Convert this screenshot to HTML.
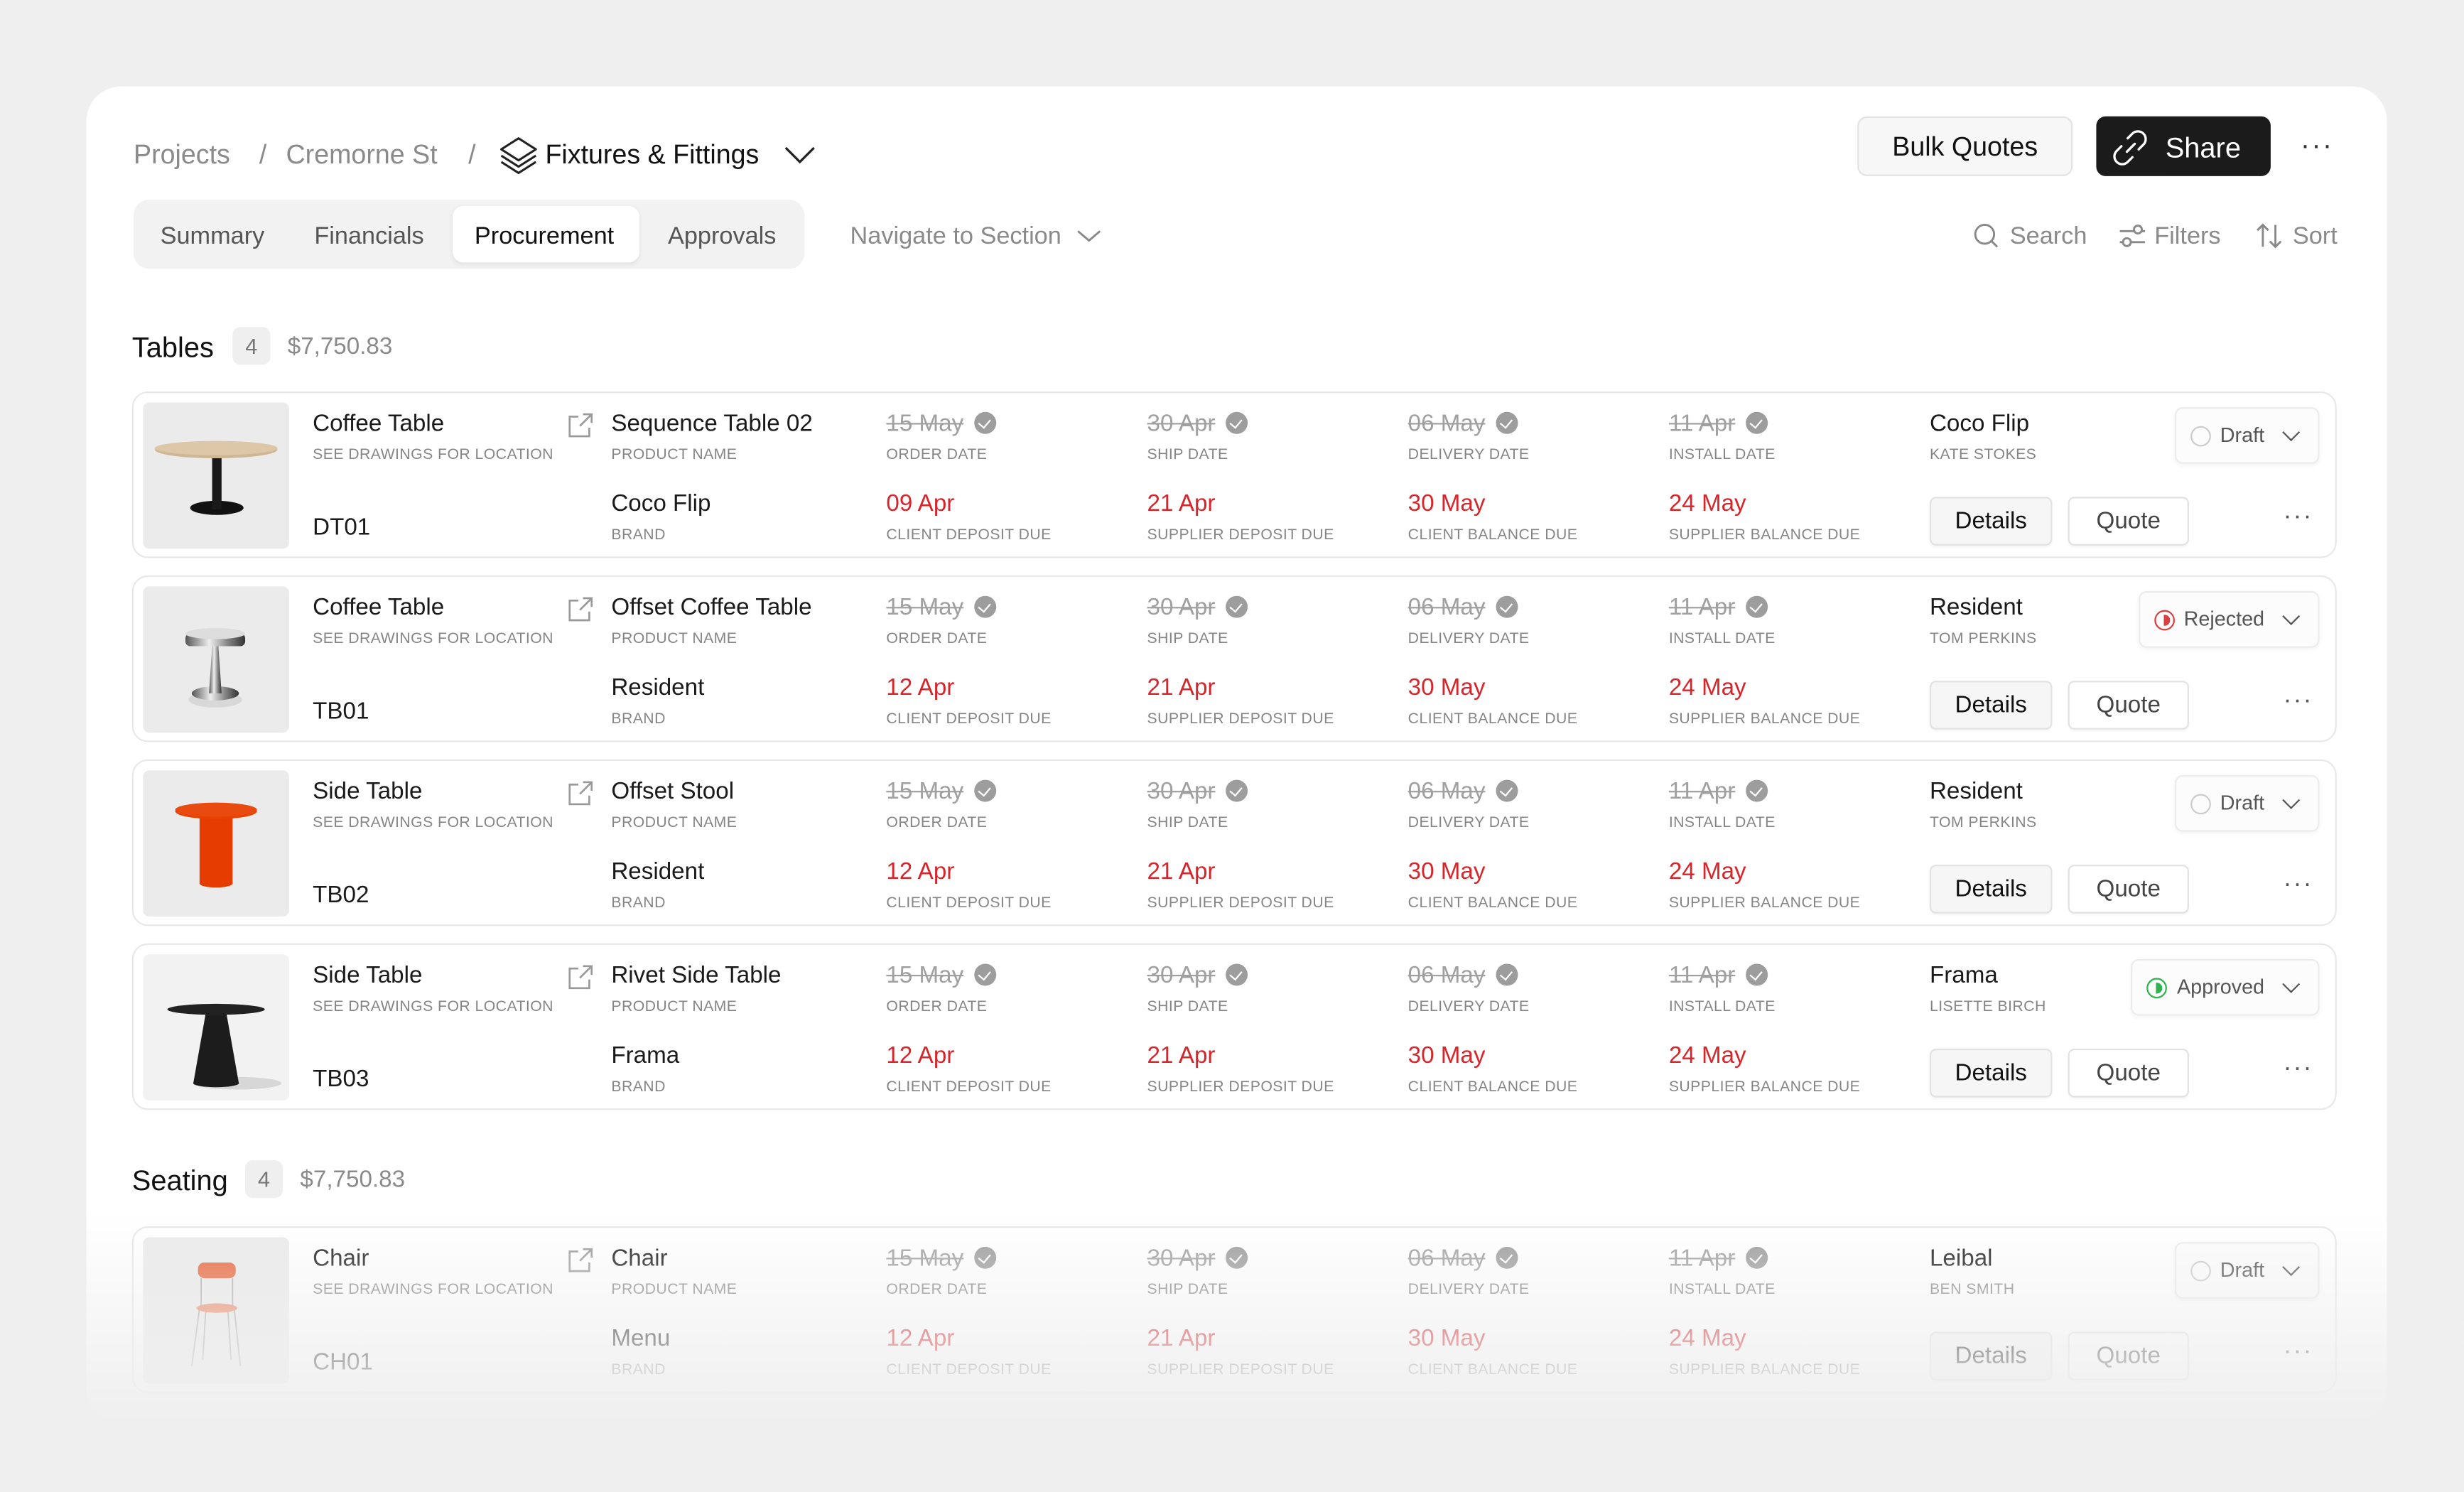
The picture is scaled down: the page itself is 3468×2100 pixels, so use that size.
<!DOCTYPE html>
<html><head><meta charset="utf-8">
<style>
html,body{margin:0;padding:0;background:#efefef;overflow:hidden}
body{width:3468px;height:2100px;font-family:"Liberation Sans",sans-serif}
#w{position:absolute;left:0;top:0;width:1568px;height:949px;transform:scale(2.2117,2.2129);transform-origin:0 0;background:#efefef}
.card{position:absolute;left:55px;top:55px;width:1464px;height:850px;background:#fff;border-radius:22px}
.a{position:absolute;white-space:nowrap}
.g{color:#8a8a8a}
.row{position:absolute;left:84px;width:1401px;height:104px;border:1px solid #e8e8e8;border-radius:10px;background:#fff}
.img{position:absolute;left:6px;top:6px;width:93px;height:93px;background:#ebebeb;border-radius:4px;overflow:hidden}
.t{position:absolute;font-size:15px;line-height:18px;color:#1a1a1a;white-space:nowrap}
.l{position:absolute;font-size:9.6px;line-height:12px;color:#858585;letter-spacing:.2px;white-space:nowrap}
.s{position:absolute;font-size:15px;line-height:18px;color:#a0a0a0;text-decoration:line-through;white-space:nowrap}
.s i{display:inline-block;width:14px;height:14px;border-radius:7px;background:#9d9d9d;vertical-align:-2px;margin-left:7px;position:relative;text-decoration:none}
.s i:after{content:"";position:absolute;left:4px;top:3px;width:4px;height:6px;border:solid #fff;border-width:0 1.5px 1.5px 0;transform:rotate(40deg)}
.r{position:absolute;font-size:15px;line-height:18px;color:#d7262b;white-space:nowrap}
.btn{position:absolute;top:66px;height:29px;border:1px solid #e2e2e2;border-radius:4px;font-size:15px;line-height:29px;text-align:center;box-shadow:0 1px 1px rgba(0,0,0,.04)}
.st{position:absolute;top:9px;right:10px;height:34px;border:1px solid #ececec;border-radius:5px;background:#fcfcfc;box-shadow:0 1px 3px rgba(0,0,0,.05);font-size:13px;line-height:34px;color:#555;padding-left:9px;padding-right:34px;white-space:nowrap}
.st .c{display:inline-block;width:11px;height:11px;border:1.5px solid #ccc;border-radius:50%;vertical-align:-3px;margin-right:6px;position:relative;overflow:hidden}
.st:after{content:"";position:absolute;right:13px;top:11px;width:7px;height:7px;border:solid #555;border-width:0 1.2px 1.2px 0;transform:rotate(45deg)}
.dots{position:absolute;left:1368px;top:70px;font-size:16px;color:#555;letter-spacing:1px}
.ext{position:absolute;left:276px;top:12px}
.fade{position:absolute;left:0;top:770px;width:1568px;height:179px;background:linear-gradient(rgba(239,239,239,0),rgba(239,239,239,.55) 40%,#efefef 75%)}
</style></head><body><div id="w">
<div class="card"></div>

<div class="a g" style="left:85px;top:89px;font-size:17px">Projects</div>
<div class="a g" style="left:165px;top:89px;font-size:17px">/</div>
<div class="a g" style="left:182px;top:89px;font-size:17px">Cremorne St</div>
<div class="a g" style="left:298px;top:89px;font-size:17px">/</div>
<svg class="a" style="left:316px;top:86px" width="28" height="26" viewBox="0 0 28 26" fill="none" stroke="#222" stroke-width="1.4" stroke-linejoin="round"><path d="M14 2 L25 9 L14 16 L3 9 Z"/><path d="M3 13 L14 20 L25 13"/><path d="M3 17 L14 24 L25 17"/></svg>
<div class="a" style="left:347px;top:89px;font-size:17px;color:#111">Fixtures &amp; Fittings</div>
<svg class="a" style="left:498px;top:91px" width="22" height="14" viewBox="0 0 22 14" fill="none" stroke="#222" stroke-width="1.5"><path d="M2 3 L11 12 L20 3"/></svg>

<div class="a" style="left:1182px;top:74px;width:135px;height:36px;background:#f7f7f7;border:1px solid #e3e3e3;border-radius:6px;font-size:17px;line-height:38px;text-align:center;color:#111">Bulk Quotes</div>
<div class="a" style="left:1334px;top:74px;width:111px;height:38px;background:#1b1b1b;border-radius:6px"></div>
<svg class="a" style="left:1344px;top:82px" width="24" height="24" viewBox="0 0 24 24" fill="none" stroke="#fff" stroke-width="1.5" stroke-linecap="round"><path d="M10 6 L13 3 A4.5 4.5 0 0 1 20 10 L17 13"/><path d="M13 18 L10 21 A4.5 4.5 0 0 1 3 14 L6 11"/><path d="M9.5 14.5 L14.5 9.5"/></svg>
<div class="a" style="left:1378px;top:84px;font-size:18px;color:#fff">Share</div>
<div class="a" style="left:1464px;top:82px;font-size:18px;color:#333;letter-spacing:1px">···</div>

<div class="a" style="left:85px;top:127px;width:427px;height:44px;background:#f2f2f2;border-radius:10px"></div>
<div class="a" style="left:288px;top:131px;width:119px;height:36px;background:#fff;border-radius:7px;box-shadow:0 1px 3px rgba(0,0,0,.08)"></div>
<div class="a" style="left:102px;top:142px;font-size:15.5px;color:#555">Summary</div>
<div class="a" style="left:200px;top:142px;font-size:15.5px;color:#555">Financials</div>
<div class="a" style="left:302px;top:142px;font-size:15.5px;color:#111">Procurement</div>
<div class="a" style="left:425px;top:142px;font-size:15.5px;color:#555">Approvals</div>
<div class="a g" style="left:541px;top:142px;font-size:15.5px">Navigate to Section</div>
<svg class="a" style="left:685px;top:145px" width="16" height="10" viewBox="0 0 16 10" fill="none" stroke="#888" stroke-width="1.3"><path d="M1 2 L8 8 L15 2"/></svg>

<svg class="a" style="left:1255px;top:141px" width="18" height="18" viewBox="0 0 18 18" fill="none" stroke="#888" stroke-width="1.3"><circle cx="8" cy="8" r="6"/><path d="M12.5 12.5 L16 16"/></svg>
<div class="a g" style="left:1279px;top:142px;font-size:15.5px">Search</div>
<svg class="a" style="left:1348px;top:141px" width="18" height="18" viewBox="0 0 18 18" fill="none" stroke="#888" stroke-width="1.3"><path d="M1 6 H10 M15 6 H17 M1 13 H3 M8 13 H17"/><circle cx="12.5" cy="5" r="2.5"/><circle cx="5.5" cy="13" r="2.5"/></svg>
<div class="a g" style="left:1371px;top:142px;font-size:15.5px">Filters</div>
<svg class="a" style="left:1435px;top:141px" width="18" height="18" viewBox="0 0 18 18" fill="none" stroke="#888" stroke-width="1.3"><path d="M5 16 V2 M1.5 5.5 L5 2 L8.5 5.5 M13 2 V16 M9.5 12.5 L13 16 L16.5 12.5"/></svg>
<div class="a g" style="left:1459px;top:142px;font-size:15.5px">Sort</div>

<div class="a" style="left:84px;top:211px;font-size:18px;color:#111">Tables</div>
<div class="a" style="left:148px;top:208px;width:24px;height:24px;background:#efefef;border-radius:5px;font-size:14px;line-height:24px;text-align:center;color:#777">4</div>
<div class="a g" style="left:183px;top:212px;font-size:15px">$7,750.83</div>

<!-- ROW 1 -->
<div class="row" style="top:249px">
<div class="img"><svg width="93" height="93" viewBox="0 0 93 93"><ellipse cx="47" cy="67" rx="17" ry="4.5" fill="#111"/><rect x="44" y="32" width="6" height="36" fill="#1a1a1a"/><ellipse cx="46.5" cy="30" rx="39" ry="5.5" fill="#cfb694"/><ellipse cx="46.5" cy="29" rx="39" ry="4.5" fill="#dcc8a8"/></svg></div>
<div class="t" style="left:114px;top:11px">Coffee Table</div><div class="l" style="left:114px;top:34px">SEE DRAWINGS FOR LOCATION</div><div class="t" style="left:114px;top:77px">DT01</div>
<svg class="ext" width="17" height="17" viewBox="0 0 17 17" fill="none" stroke="#999" stroke-width="1.2"><path d="M7 3 H1.5 V15.5 H14 V10 M10 1.5 H15.5 V7 M15.5 1.5 L8 9"/></svg>
<div class="t" style="left:304px;top:11px">Sequence Table 02</div><div class="l" style="left:304px;top:34px">PRODUCT NAME</div><div class="t" style="left:304px;top:62px">Coco Flip</div><div class="l" style="left:304px;top:85px">BRAND</div>
<div class="s" style="left:479px;top:11px">15 May<i></i></div><div class="l" style="left:479px;top:34px">ORDER DATE</div><div class="r" style="left:479px;top:62px">09 Apr</div><div class="l" style="left:479px;top:85px">CLIENT DEPOSIT DUE</div>
<div class="s" style="left:645px;top:11px">30 Apr<i></i></div><div class="l" style="left:645px;top:34px">SHIP DATE</div><div class="r" style="left:645px;top:62px">21 Apr</div><div class="l" style="left:645px;top:85px">SUPPLIER DEPOSIT DUE</div>
<div class="s" style="left:811px;top:11px">06 May<i></i></div><div class="l" style="left:811px;top:34px">DELIVERY DATE</div><div class="r" style="left:811px;top:62px">30 May</div><div class="l" style="left:811px;top:85px">CLIENT BALANCE DUE</div>
<div class="s" style="left:977px;top:11px">11 Apr<i></i></div><div class="l" style="left:977px;top:34px">INSTALL DATE</div><div class="r" style="left:977px;top:62px">24 May</div><div class="l" style="left:977px;top:85px">SUPPLIER BALANCE DUE</div>
<div class="t" style="left:1143px;top:11px">Coco Flip</div><div class="l" style="left:1143px;top:34px">KATE STOKES</div>
<div class="st"><span class="c"></span>Draft</div>
<div class="btn" style="left:1143px;width:76px;background:#f6f6f6;color:#111">Details</div><div class="btn" style="left:1231px;width:75px;background:#fff;color:#444">Quote</div><div class="dots">···</div>
</div>

<!-- ROW 2 -->
<div class="row" style="top:366px">
<div class="img"><svg width="93" height="93" viewBox="0 0 93 93"><defs><linearGradient id="ch" x1="0" x2="1"><stop offset="0" stop-color="#555"/><stop offset=".4" stop-color="#eee"/><stop offset=".7" stop-color="#888"/><stop offset="1" stop-color="#333"/></linearGradient></defs><ellipse cx="46" cy="72" rx="17" ry="5" fill="#ccc" opacity=".6"/><ellipse cx="46" cy="68" rx="15" ry="4.5" fill="url(#ch)"/><path d="M44 38 L48 38 L50 68 L42 68 Z" fill="url(#ch)"/><rect x="27" y="30" width="38" height="8" rx="3" fill="url(#ch)"/><ellipse cx="46" cy="30" rx="19" ry="3.5" fill="#ddd"/></svg></div>
<div class="t" style="left:114px;top:11px">Coffee Table</div><div class="l" style="left:114px;top:34px">SEE DRAWINGS FOR LOCATION</div><div class="t" style="left:114px;top:77px">TB01</div>
<svg class="ext" width="17" height="17" viewBox="0 0 17 17" fill="none" stroke="#999" stroke-width="1.2"><path d="M7 3 H1.5 V15.5 H14 V10 M10 1.5 H15.5 V7 M15.5 1.5 L8 9"/></svg>
<div class="t" style="left:304px;top:11px">Offset Coffee Table</div><div class="l" style="left:304px;top:34px">PRODUCT NAME</div><div class="t" style="left:304px;top:62px">Resident</div><div class="l" style="left:304px;top:85px">BRAND</div>
<div class="s" style="left:479px;top:11px">15 May<i></i></div><div class="l" style="left:479px;top:34px">ORDER DATE</div><div class="r" style="left:479px;top:62px">12 Apr</div><div class="l" style="left:479px;top:85px">CLIENT DEPOSIT DUE</div>
<div class="s" style="left:645px;top:11px">30 Apr<i></i></div><div class="l" style="left:645px;top:34px">SHIP DATE</div><div class="r" style="left:645px;top:62px">21 Apr</div><div class="l" style="left:645px;top:85px">SUPPLIER DEPOSIT DUE</div>
<div class="s" style="left:811px;top:11px">06 May<i></i></div><div class="l" style="left:811px;top:34px">DELIVERY DATE</div><div class="r" style="left:811px;top:62px">30 May</div><div class="l" style="left:811px;top:85px">CLIENT BALANCE DUE</div>
<div class="s" style="left:977px;top:11px">11 Apr<i></i></div><div class="l" style="left:977px;top:34px">INSTALL DATE</div><div class="r" style="left:977px;top:62px">24 May</div><div class="l" style="left:977px;top:85px">SUPPLIER BALANCE DUE</div>
<div class="t" style="left:1143px;top:11px">Resident</div><div class="l" style="left:1143px;top:34px">TOM PERKINS</div>
<div class="st"><span class="c" style="border-color:#d94040"><b style="position:absolute;left:5px;top:2px;width:4px;height:7px;background:#d94040;border-radius:0 4px 4px 0"></b></span>Rejected</div>
<div class="btn" style="left:1143px;width:76px;background:#f6f6f6;color:#111">Details</div><div class="btn" style="left:1231px;width:75px;background:#fff;color:#444">Quote</div><div class="dots">···</div>
</div>

<!-- ROW 3 -->
<div class="row" style="top:483px">
<div class="img"><svg width="93" height="93" viewBox="0 0 93 93"><rect x="36" y="26" width="21" height="46" fill="#e63c00"/><ellipse cx="46.5" cy="72" rx="10.5" ry="2.5" fill="#e63c00"/><ellipse cx="46.5" cy="26" rx="26" ry="5" fill="#ea4000"/><ellipse cx="46.5" cy="25" rx="26" ry="4.5" fill="#e84a10"/></svg></div>
<div class="t" style="left:114px;top:11px">Side Table</div><div class="l" style="left:114px;top:34px">SEE DRAWINGS FOR LOCATION</div><div class="t" style="left:114px;top:77px">TB02</div>
<svg class="ext" width="17" height="17" viewBox="0 0 17 17" fill="none" stroke="#999" stroke-width="1.2"><path d="M7 3 H1.5 V15.5 H14 V10 M10 1.5 H15.5 V7 M15.5 1.5 L8 9"/></svg>
<div class="t" style="left:304px;top:11px">Offset Stool</div><div class="l" style="left:304px;top:34px">PRODUCT NAME</div><div class="t" style="left:304px;top:62px">Resident</div><div class="l" style="left:304px;top:85px">BRAND</div>
<div class="s" style="left:479px;top:11px">15 May<i></i></div><div class="l" style="left:479px;top:34px">ORDER DATE</div><div class="r" style="left:479px;top:62px">12 Apr</div><div class="l" style="left:479px;top:85px">CLIENT DEPOSIT DUE</div>
<div class="s" style="left:645px;top:11px">30 Apr<i></i></div><div class="l" style="left:645px;top:34px">SHIP DATE</div><div class="r" style="left:645px;top:62px">21 Apr</div><div class="l" style="left:645px;top:85px">SUPPLIER DEPOSIT DUE</div>
<div class="s" style="left:811px;top:11px">06 May<i></i></div><div class="l" style="left:811px;top:34px">DELIVERY DATE</div><div class="r" style="left:811px;top:62px">30 May</div><div class="l" style="left:811px;top:85px">CLIENT BALANCE DUE</div>
<div class="s" style="left:977px;top:11px">11 Apr<i></i></div><div class="l" style="left:977px;top:34px">INSTALL DATE</div><div class="r" style="left:977px;top:62px">24 May</div><div class="l" style="left:977px;top:85px">SUPPLIER BALANCE DUE</div>
<div class="t" style="left:1143px;top:11px">Resident</div><div class="l" style="left:1143px;top:34px">TOM PERKINS</div>
<div class="st"><span class="c"></span>Draft</div>
<div class="btn" style="left:1143px;width:76px;background:#f6f6f6;color:#111">Details</div><div class="btn" style="left:1231px;width:75px;background:#fff;color:#444">Quote</div><div class="dots">···</div>
</div>

<!-- ROW 4 -->
<div class="row" style="top:600px">
<div class="img" style="background:#f2f2f2"><svg width="93" height="93" viewBox="0 0 93 93"><ellipse cx="60" cy="82" rx="28" ry="4" fill="#ccc" opacity=".7"/><path d="M40 37 L53 37 L61 82 L32 82 Z" fill="#1c1c1c"/><ellipse cx="46.5" cy="82" rx="14.5" ry="2.5" fill="#1c1c1c"/><ellipse cx="46.5" cy="35" rx="31" ry="3.5" fill="#222"/></svg></div>
<div class="t" style="left:114px;top:11px">Side Table</div><div class="l" style="left:114px;top:34px">SEE DRAWINGS FOR LOCATION</div><div class="t" style="left:114px;top:77px">TB03</div>
<svg class="ext" width="17" height="17" viewBox="0 0 17 17" fill="none" stroke="#999" stroke-width="1.2"><path d="M7 3 H1.5 V15.5 H14 V10 M10 1.5 H15.5 V7 M15.5 1.5 L8 9"/></svg>
<div class="t" style="left:304px;top:11px">Rivet Side Table</div><div class="l" style="left:304px;top:34px">PRODUCT NAME</div><div class="t" style="left:304px;top:62px">Frama</div><div class="l" style="left:304px;top:85px">BRAND</div>
<div class="s" style="left:479px;top:11px">15 May<i></i></div><div class="l" style="left:479px;top:34px">ORDER DATE</div><div class="r" style="left:479px;top:62px">12 Apr</div><div class="l" style="left:479px;top:85px">CLIENT DEPOSIT DUE</div>
<div class="s" style="left:645px;top:11px">30 Apr<i></i></div><div class="l" style="left:645px;top:34px">SHIP DATE</div><div class="r" style="left:645px;top:62px">21 Apr</div><div class="l" style="left:645px;top:85px">SUPPLIER DEPOSIT DUE</div>
<div class="s" style="left:811px;top:11px">06 May<i></i></div><div class="l" style="left:811px;top:34px">DELIVERY DATE</div><div class="r" style="left:811px;top:62px">30 May</div><div class="l" style="left:811px;top:85px">CLIENT BALANCE DUE</div>
<div class="s" style="left:977px;top:11px">11 Apr<i></i></div><div class="l" style="left:977px;top:34px">INSTALL DATE</div><div class="r" style="left:977px;top:62px">24 May</div><div class="l" style="left:977px;top:85px">SUPPLIER BALANCE DUE</div>
<div class="t" style="left:1143px;top:11px">Frama</div><div class="l" style="left:1143px;top:34px">LISETTE BIRCH</div>
<div class="st"><span class="c" style="border-color:#2fb34f"><b style="position:absolute;left:5px;top:2px;width:4px;height:7px;background:#2fb34f;border-radius:0 4px 4px 0"></b></span>Approved</div>
<div class="btn" style="left:1143px;width:76px;background:#f6f6f6;color:#111">Details</div><div class="btn" style="left:1231px;width:75px;background:#fff;color:#444">Quote</div><div class="dots">···</div>
</div>

<div class="a" style="left:84px;top:741px;font-size:18px;color:#111">Seating</div>
<div class="a" style="left:156px;top:738px;width:24px;height:24px;background:#efefef;border-radius:5px;font-size:14px;line-height:24px;text-align:center;color:#777">4</div>
<div class="a g" style="left:191px;top:742px;font-size:15px">$7,750.83</div>

<!-- ROW 5 -->
<div class="row" style="top:780px">
<div class="img"><svg width="93" height="93" viewBox="0 0 93 93" fill="none" stroke="#aaa" stroke-width=".8"><rect x="35" y="16" width="24" height="10" rx="4" fill="#e8643a" stroke="none"/><path d="M37 26 L37 44 M57 26 L57 44 M36 45 L31 82 M58 45 L62 82 M40 46 L38 78 M54 46 L56 78"/><ellipse cx="47" cy="45" rx="13" ry="3" fill="#eb8a68" stroke="none"/></svg></div>
<div class="t" style="left:114px;top:11px">Chair</div><div class="l" style="left:114px;top:34px">SEE DRAWINGS FOR LOCATION</div><div class="t" style="left:114px;top:77px">CH01</div>
<svg class="ext" width="17" height="17" viewBox="0 0 17 17" fill="none" stroke="#999" stroke-width="1.2"><path d="M7 3 H1.5 V15.5 H14 V10 M10 1.5 H15.5 V7 M15.5 1.5 L8 9"/></svg>
<div class="t" style="left:304px;top:11px">Chair</div><div class="l" style="left:304px;top:34px">PRODUCT NAME</div><div class="t" style="left:304px;top:62px">Menu</div><div class="l" style="left:304px;top:85px">BRAND</div>
<div class="s" style="left:479px;top:11px">15 May<i></i></div><div class="l" style="left:479px;top:34px">ORDER DATE</div><div class="r" style="left:479px;top:62px">12 Apr</div><div class="l" style="left:479px;top:85px">CLIENT DEPOSIT DUE</div>
<div class="s" style="left:645px;top:11px">30 Apr<i></i></div><div class="l" style="left:645px;top:34px">SHIP DATE</div><div class="r" style="left:645px;top:62px">21 Apr</div><div class="l" style="left:645px;top:85px">SUPPLIER DEPOSIT DUE</div>
<div class="s" style="left:811px;top:11px">06 May<i></i></div><div class="l" style="left:811px;top:34px">DELIVERY DATE</div><div class="r" style="left:811px;top:62px">30 May</div><div class="l" style="left:811px;top:85px">CLIENT BALANCE DUE</div>
<div class="s" style="left:977px;top:11px">11 Apr<i></i></div><div class="l" style="left:977px;top:34px">INSTALL DATE</div><div class="r" style="left:977px;top:62px">24 May</div><div class="l" style="left:977px;top:85px">SUPPLIER BALANCE DUE</div>
<div class="t" style="left:1143px;top:11px">Leibal</div><div class="l" style="left:1143px;top:34px">BEN SMITH</div>
<div class="st"><span class="c"></span>Draft</div>
<div class="btn" style="left:1143px;width:76px;background:#f6f6f6;color:#111">Details</div><div class="btn" style="left:1231px;width:75px;background:#fff;color:#444">Quote</div><div class="dots">···</div>
</div>

<div class="fade"></div>
</div></body></html>
